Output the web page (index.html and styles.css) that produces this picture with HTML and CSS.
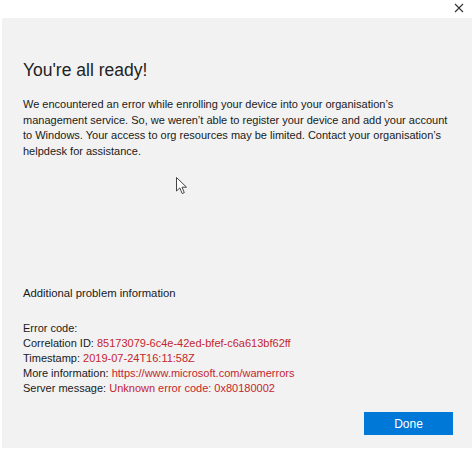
FILE: index.html
```html
<!DOCTYPE html>
<html>
<head>
<meta charset="utf-8">
<link rel="stylesheet" href="styles.css">
</head>
<body>
<div class="window">
  <div class="titlebar">
    <svg class="close" width="10" height="10" viewBox="0 0 10 10"><path d="M1 1L9 9M9 1L1 9" stroke="#333" stroke-width="1.1"/></svg>
  </div>
  <div class="panel">
    <h1 class="title">You're all ready!</h1>
    <p class="body">We encountered an error while enrolling your device into your organisation’s management service. So, we weren’t able to register your device and add your account to Windows. Your access to org resources may be limited. Contact your organisation’s helpdesk for assistance.</p>
    <div class="spacer"></div>
    <p class="heading">Additional problem information</p>
    <div class="details">
      <div>Error code:</div>
      <div>Correlation ID: <span class="err">85173079-6c4e-42ed-bfef-c6a613bf62ff</span></div>
      <div>Timestamp: <span class="err">2019-07-24T16:11:58Z</span></div>
      <div>More information: <span class="err">https://www.microsoft.com/wamerrors</span></div>
      <div>Server message: <span class="err">Unknown error code: 0x80180002</span></div>
    </div>
    <div class="actions">
      <button class="done">Done</button>
    </div>
    <svg class="cursor" width="12" height="18" viewBox="0 0 12 18"><path d="M0.5 0.5V14L3.8 10.9L6.2 16.5L8.3 15.6L6 10.2H10.5Z" fill="#fff" stroke="#444" stroke-width="1"/></svg>
  </div>
</div>
</body>
</html>
```
FILE: styles.css
```css
html, body {
  margin: 0;
  padding: 0;
  background: #fff;
}
body {
  width: 474px;
  height: 456px;
  font-family: "Liberation Sans", Arial, sans-serif;
  color: #1a1a1a;
}
.window {
  display: flex;
  flex-direction: column;
  height: 456px;
}
.titlebar {
  height: 18px;
  display: flex;
  justify-content: flex-end;
  align-items: flex-start;
  padding-right: 10px;
}
.close {
  margin-top: 3px;
}
.panel {
  position: relative;
  margin: 0 2px 8px 2px;
  flex: 1;
  background: #f2f2f2;
  padding: 0 21px;
  display: flex;
  flex-direction: column;
}
.title {
  margin: 39px 0 0 0;
  font-size: 17.5px;
  font-weight: normal;
  line-height: 26px;
  color: #222;
}
.body {
  margin: 14px 0 0 0;
  font-size: 11px;
  line-height: 15.6px;
}
.spacer {
  flex: 1;
}
.heading {
  margin: 0;
  font-size: 11.3px;
  line-height: 15px;
}
.details {
  margin-top: 20px;
  font-size: 11px;
  line-height: 15px;
}
.err {
  color: #c4262e;
}
.actions {
  display: flex;
  justify-content: flex-end;
  margin-top: 16px;
  margin-right: -2px;
  margin-bottom: 13px;
}
.done {
  width: 89px;
  height: 23px;
  background: #0078d7;
  border: none;
  color: #fff;
  font-family: "Liberation Sans", Arial, sans-serif;
  font-size: 12px;
  padding: 0;
}
.cursor {
  position: absolute;
  left: 174px;
  top: 159px;
}
```
